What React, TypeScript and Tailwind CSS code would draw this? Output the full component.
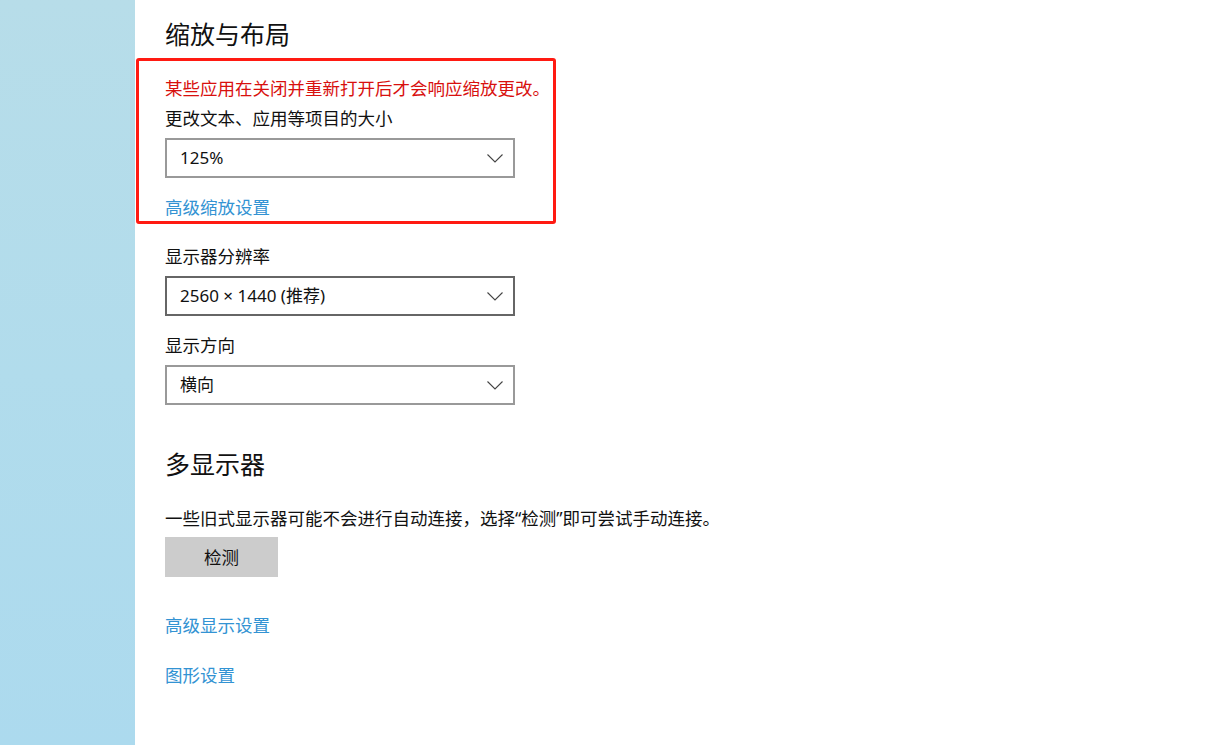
import { ReactNode } from 'react';

const font = { fontFamily: '"Noto Sans", "Noto Sans CJK SC", sans-serif' };

const Chevron = () => (
  <svg width="16" height="9" viewBox="0 0 16 9" fill="none" className="shrink-0">
    <path d="M0.5 0.5 L8 8 L15.5 0.5" stroke="#444" strokeWidth="1.1" />
  </svg>
);

const Select = ({ value, dark }: { value: string; dark?: boolean }) => (
  <div
    className={`flex items-center justify-between w-[350px] h-[40px] border-2 bg-white pl-[13px] pr-[10px] text-[17px] text-[#111] ${
      dark ? 'border-[#666666]' : 'border-[#999999]'
    }`}
  >
    <span>{value}</span>
    <Chevron />
  </div>
);

const Label = ({ children, className = '' }: { children: ReactNode; className?: string }) => (
  <div className={`h-[24px] leading-[24px] text-[17.5px] text-[#111] whitespace-nowrap ${className}`}>{children}</div>
);

const Link = ({ children, className = '' }: { children: ReactNode; className?: string }) => (
  <div className={`h-[24px] leading-[24px] text-[17.5px] text-[#3393d3] ${className}`}>{children}</div>
);

export default function App() {
  return (
    <div className="flex w-[1217px] h-[745px] bg-white overflow-hidden" style={font}>
      <div className="w-[135px] shrink-0 bg-gradient-to-b from-[#b7dde9] via-[#b1dcec] to-[#acdaee]" />
      <div className="flex-1 pl-[30px] pt-[16px]">
        <div className="h-[36px] leading-[36px] text-[25px] text-[#111]">缩放与布局</div>

        <div className="mt-[6px] -ml-[29px] w-[420px] h-[166px] border-[3px] border-[#ff1a12] rounded-[3px] pl-[26px] pt-[15px]">
          <Label className="text-[#d8100e]">某些应用在关闭并重新打开后才会响应缩放更改。</Label>
          <Label className="mt-[6px]">更改文本、应用等项目的大小</Label>
          <div className="mt-[8px]">
            <Select value="125%" />
          </div>
          <Link className="mt-[17px]">高级缩放设置</Link>
        </div>

        <Label className="mt-[20px]">显示器分辨率</Label>
        <div className="mt-[8px]">
          <Select value="2560 × 1440 (推荐)" dark />
        </div>
        <Label className="mt-[17px]">显示方向</Label>
        <div className="mt-[8px]">
          <Select value="横向" />
        </div>

        <div className="mt-[41px] h-[36px] leading-[36px] text-[25px] text-[#111]">多显示器</div>
        <Label className="mt-[24px]">一些旧式显示器可能不会进行自动连接，选择“检测”即可尝试手动连接。</Label>
        <button className="mt-[7px] block w-[113px] h-[40px] bg-[#cccccc] text-[17.5px] text-[#111]">检测</button>

        <Link className="mt-[36px]">高级显示设置</Link>
        <Link className="mt-[26px]">图形设置</Link>
      </div>
    </div>
  );
}
